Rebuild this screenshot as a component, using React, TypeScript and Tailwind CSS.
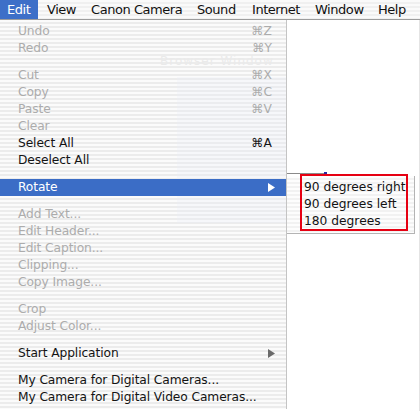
import React from "react";

type Item =
  | { kind: "sep" }
  | { kind: "item"; label: string; disabled?: boolean; shortcut?: string; arrow?: boolean; active?: boolean; arrowDim?: boolean };

const items: Item[] = [
  { kind: "item", label: "Undo", disabled: true, shortcut: "⌘Z" },
  { kind: "item", label: "Redo", disabled: true, shortcut: "⌘Y" },
  { kind: "sep" },
  { kind: "item", label: "Cut", disabled: true, shortcut: "⌘X" },
  { kind: "item", label: "Copy", disabled: true, shortcut: "⌘C" },
  { kind: "item", label: "Paste", disabled: true, shortcut: "⌘V" },
  { kind: "item", label: "Clear", disabled: true },
  { kind: "item", label: "Select All", shortcut: "⌘A" },
  { kind: "item", label: "Deselect All" },
  { kind: "sep" },
  { kind: "item", label: "Rotate", arrow: true, active: true },
  { kind: "sep" },
  { kind: "item", label: "Add Text...", disabled: true },
  { kind: "item", label: "Edit Header...", disabled: true },
  { kind: "item", label: "Edit Caption...", disabled: true },
  { kind: "item", label: "Clipping...", disabled: true },
  { kind: "item", label: "Copy Image...", disabled: true },
  { kind: "sep" },
  { kind: "item", label: "Crop", disabled: true },
  { kind: "item", label: "Adjust Color...", disabled: true },
  { kind: "sep" },
  { kind: "item", label: "Start Application", arrow: true, arrowDim: true },
  { kind: "sep" },
  { kind: "item", label: "My Camera for Digital Cameras..." },
  { kind: "item", label: "My Camera for Digital Video Cameras..." },
];

const menubar = [
  { label: "Edit", w: "w-[38px]", pl: "pl-[7px]", active: true },
  { label: "View", w: "w-[45px]", pl: "pl-[9px]" },
  { label: "Canon Camera", w: "w-[106px]", pl: "pl-[8px]" },
  { label: "Sound", w: "w-[55px]", pl: "pl-[8px]" },
  { label: "Internet", w: "w-[63px]", pl: "pl-[8px]" },
  { label: "Window", w: "w-[63px]", pl: "pl-[8px]" },
  { label: "Help", w: "w-[50px]", pl: "pl-[8px]" },
];

function Arrow({ color }: { color: string }) {
  return (
    <svg width="7" height="9" viewBox="0 0 7 9" className="shrink-0">
      <path d="M0 0 L7 4.5 L0 9 Z" fill={color} />
    </svg>
  );
}

export default function App() {
  return (
    <div
      className="relative w-[420px] h-[411px] overflow-hidden bg-white text-[12.25px] flex flex-col"
      style={{ fontFamily: '"DejaVu Sans", "Liberation Sans", sans-serif' }}
    >
      {/* Menu bar */}
      <div className="h-[20px] shrink-0 flex items-stretch border-b border-[#9c9c9c] bg-[repeating-linear-gradient(180deg,#fafafa_0px,#fafafa_2px,#f0f0f0_2px,#f0f0f0_4px)] text-[#111] text-[13px]">
        {menubar.map((m) => (
          <div
            key={m.label}
            className={`${m.w} ${m.pl} shrink-0 flex items-center whitespace-nowrap tracking-[-0.45px] ${
              m.active ? "bg-[#3d6fc8] text-white" : ""
            }`}
          >
            {m.label}
          </div>
        ))}
      </div>

      <div className="flex flex-1 min-h-0">
        {/* Main menu */}
        <div className="relative w-[287px] shrink-0 h-[389px] border-r border-[#c4c4c4] bg-[repeating-linear-gradient(180deg,#fbfbfb_0px,#fbfbfb_2px,#ececec_2px,#ececec_4px)] pt-[3px]">
          {/* faint window behind the translucent menu */}
          <div className="absolute left-[160px] top-[32px] text-[12px] text-[#eaeaea] tracking-[1px]">
            Browser Window
          </div>
          <div className="absolute left-[177px] top-[57px] w-[109px] h-[146px] bg-[#e6ebf8] opacity-25" />
          <div className="relative">
            {items.map((it, i) =>
              it.kind === "sep" ? (
                <div key={i} className="h-[10px]" />
              ) : (
                <div
                  key={i}
                  className={`h-[17px] flex items-center pl-[18px] pr-[11px] ${
                    it.active
                      ? "bg-[#3b6dc6] text-white"
                      : it.disabled
                      ? "text-[#acacac]"
                      : "text-[#141414]"
                  }`}
                >
                  <span className="flex-1 whitespace-nowrap tracking-[-0.1px]">{it.label}</span>
                  {it.shortcut && <span className="pr-[3px]">{it.shortcut}</span>}
                  {it.arrow && <Arrow color={it.active ? "#ffffff" : "#6a6a6a"} />}
                </div>
              )
            )}
          </div>
        </div>

        {/* Background window area */}
        <div className="relative flex-1 bg-white border-r border-[#e4e4e4]">
          <div className="absolute left-0 top-[153px] w-[38px] h-[1px] bg-[#8a8a8a]" />
          <div className="absolute left-[37px] top-[152px] w-[3px] h-[3px] bg-[#2a2aa0]" />
        </div>
      </div>

      {/* Submenu */}
      <div className="absolute left-[287px] top-[176px] w-[128px] h-[58px] border-r border-b border-[#b4b4b4] bg-[repeating-linear-gradient(180deg,#fdfdfd_0px,#fdfdfd_2px,#f2f2f2_2px,#f2f2f2_4px)] pl-[17px] pt-[3px] text-[#141414]">
        <div className="h-[17px] flex items-center whitespace-nowrap">90 degrees right</div>
        <div className="h-[17px] flex items-center whitespace-nowrap">90 degrees left</div>
        <div className="h-[17px] flex items-center whitespace-nowrap">180 degrees</div>
      </div>
      {/* Red annotation box */}
      <div className="absolute left-[300px] top-[174px] w-[108px] h-[57px] border-2 border-[#e60012]" />
    </div>
  );
}
